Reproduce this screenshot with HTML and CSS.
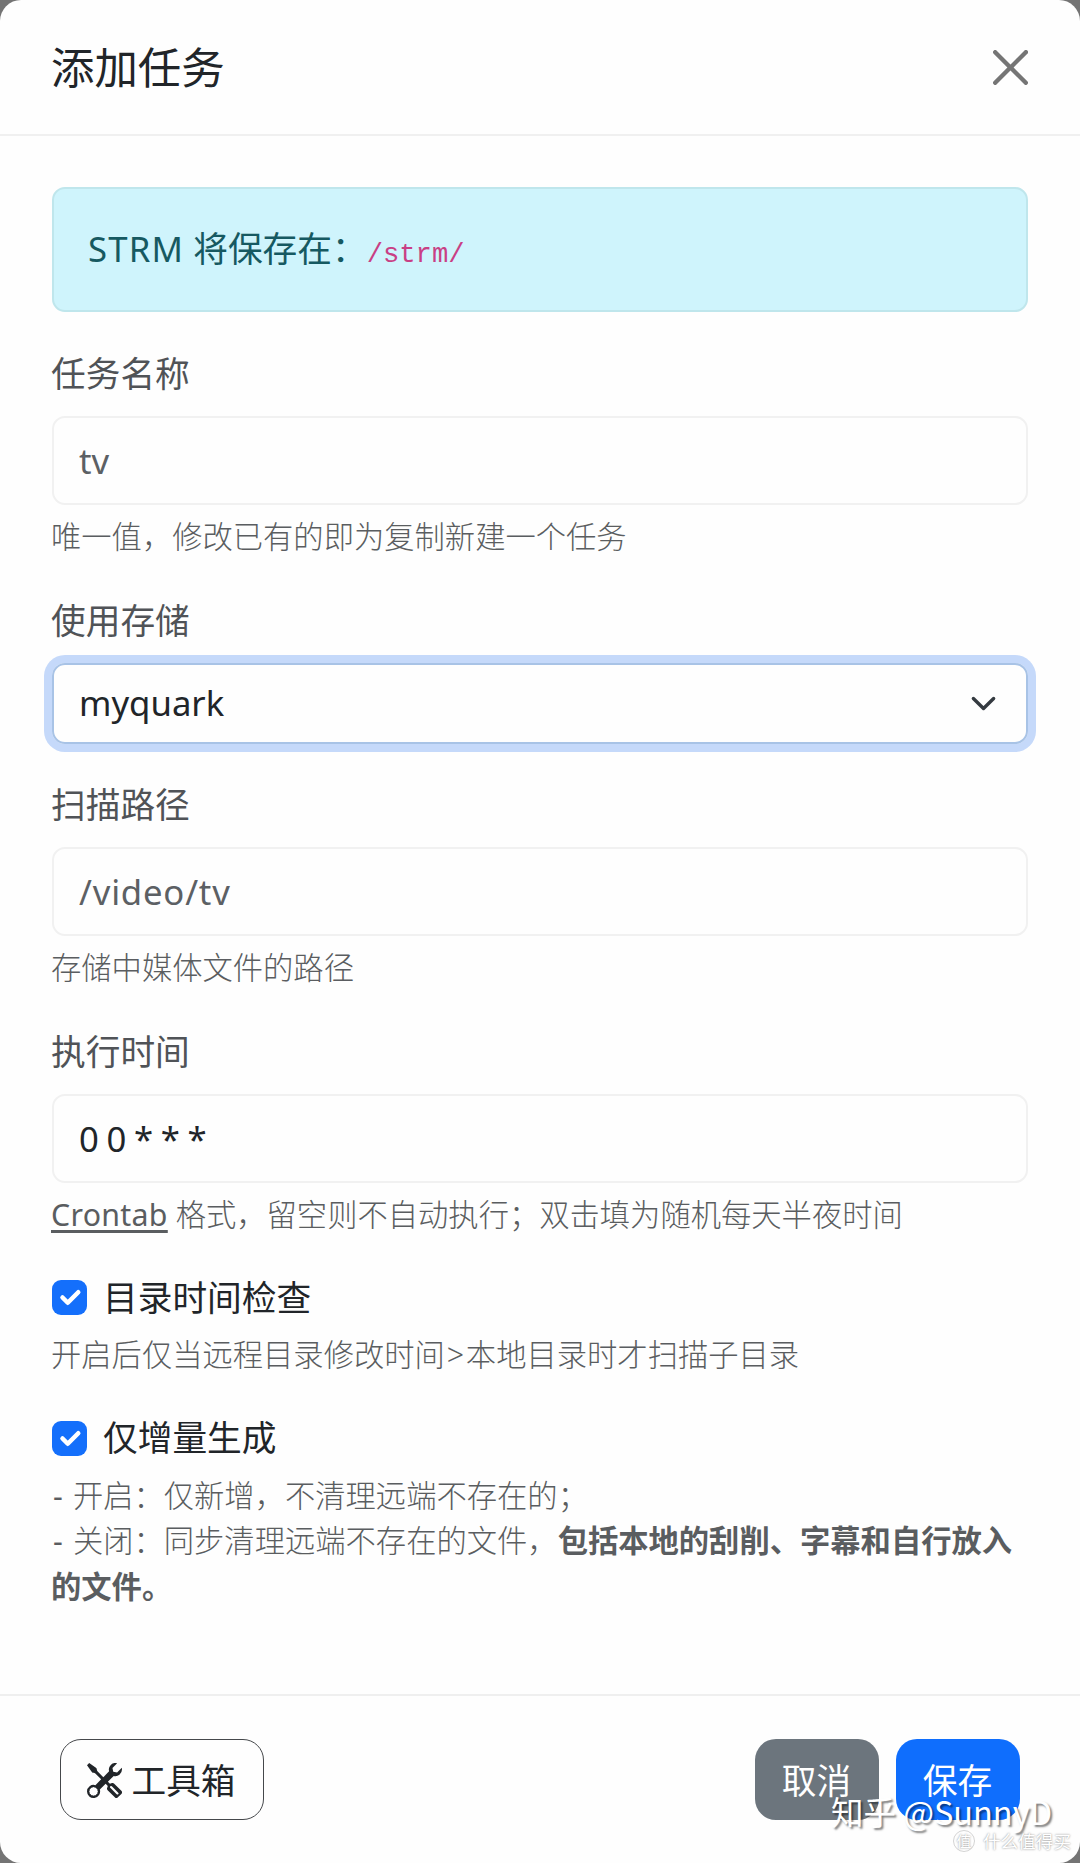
FILE: index.html
```
<!DOCTYPE html>
<html lang="zh-CN">
<head>
  <meta charset="UTF-8">
  <meta name="viewport" content="width=device-width, initial-scale=1.0">
  <title>添加任务</title>
  <link rel="stylesheet" href="styles.css">
</head>
<body>
  <div class="modal">
    <div class="modal-header">
      <h5 class="modal-title">添加任务</h5>
      <svg class="btn-close" viewBox="0 0 16 16"><path d="M.293.293a1 1 0 0 1 1.414 0L8 6.586 14.293.293a1 1 0 1 1 1.414 1.414L9.414 8l6.293 6.293a1 1 0 0 1-1.414 1.414L8 9.414l-6.293 6.293a1 1 0 0 1-1.414-1.414L6.586 8 .293 1.707a1 1 0 0 1 0-1.414z"/></svg>
    </div>

    <form class="modal-body">
      <div class="alert"><span class="alert-latin">STRM</span> 将保存在：<code>/strm/</code></div>

      <div class="field">
        <label class="form-label" for="name">任务名称</label>
        <input class="form-control" id="name" type="text" placeholder="tv">
        <div class="form-text">唯一值，修改已有的即为复制新建一个任务</div>
      </div>

      <div class="field">
        <label class="form-label">使用存储</label>
        <div class="form-select" tabindex="0">
          <span>myquark</span>
          <svg class="chevron" viewBox="0 0 16 16"><path d="m2 5 6 6 6-6"/></svg>
        </div>
      </div>

      <div class="field">
        <label class="form-label" for="path">扫描路径</label>
        <input class="form-control path-input" id="path" type="text" placeholder="/video/tv">
        <div class="form-text">存储中媒体文件的路径</div>
      </div>

      <div class="field">
        <label class="form-label" for="cron">执行时间</label>
        <input class="form-control cron-input" id="cron" type="text" value="0 0 * * *">
        <div class="form-text"><a class="cron-link">Crontab</a> 格式，留空则不自动执行；双击填为随机每天半夜时间</div>
      </div>

      <div class="field">
        <div class="form-check">
          <span class="check-box"><svg viewBox="0 0 20 20"><path d="m6 10 3 3 6-6"/></svg></span>
          <span>目录时间检查</span>
        </div>
        <div class="form-text">开启后仅当远程目录修改时间<span class="gt">&gt;</span>本地目录时才扫描子目录</div>
      </div>

      <div class="field">
        <div class="form-check">
          <span class="check-box"><svg viewBox="0 0 20 20"><path d="m6 10 3 3 6-6"/></svg></span>
          <span>仅增量生成</span>
        </div>
        <div class="form-text"><span class="dash">-</span> 开启：仅新增，不清理远端不存在的；<br><span class="dash">-</span> 关闭：同步清理远端不存在的文件，<strong>包括本地的刮削、字幕和自行放入的文件。</strong></div>
      </div>
    </form>

    <div class="modal-footer">
      <button class="btn btn-outline" type="button">
        <svg class="icon-tools" viewBox="0 0 16 16"><path d="M1 0 0 1l2.2 3.081a1 1 0 0 0 .815.419h.07a1 1 0 0 1 .708.293l2.675 2.675-2.617 2.654A3.003 3.003 0 0 0 0 13a3 3 0 1 0 5.878-.851l2.654-2.617.968.968-.305.914a1 1 0 0 0 .242 1.023l3.27 3.27a.997.997 0 0 0 1.414 0l1.586-1.586a.997.997 0 0 0 0-1.414l-3.27-3.27a1 1 0 0 0-1.023-.242L10.5 9.5l-.96-.96 2.68-2.643A3.005 3.005 0 0 0 16 3q0-.405-.102-.777l-2.14 2.141L12 4l-.364-1.757L13.777.102a3 3 0 0 0-3.675 3.68L7.462 6.46 4.793 3.793a1 1 0 0 1-.293-.707v-.071a1 1 0 0 0-.419-.814zm9.646 10.646a.5.5 0 0 1 .708 0l2.914 2.915a.5.5 0 0 1-.707.707l-2.915-2.914a.5.5 0 0 1 0-.708M3 11l.471.242.529.026.287.445.445.287.026.529L5 13l-.242.471-.026.529-.445.287-.287.445-.529.026L3 15l-.471-.242L2 14.732l-.287-.445L1.268 14l-.026-.529L1 13l.242-.471.026-.529.445-.287.287-.445.529-.026z"/></svg>
        工具箱
      </button>
      <div class="footer-actions">
        <button class="btn btn-secondary" type="button">取消</button>
        <button class="btn btn-primary" type="button">保存</button>
      </div>
    </div>
  </div>

  <div class="mark mark-zhihu">知乎 @SunnyD</div>
  <div class="mark mark-smzdm"><span class="mark-badge">值</span>什么值得买</div>
</body>
</html>
```
FILE: styles.css
```
* { box-sizing: border-box; }
html { font-size: 34.7px; }
body {
  margin: 0;
  height: 1863px;
  position: relative;
  overflow: hidden;
  background: #747474;
  color: #212529;
  font-family: "Noto Sans", "Noto Sans CJK SC", sans-serif;
  line-height: 52px;
}
.modal {
  display: flex;
  flex-direction: column;
  height: 1863px;
  background: #fefefe;
  border-radius: 21px;
}
.modal-header {
  display: flex;
  justify-content: space-between;
  align-items: center;
  height: 136px;
  padding: 1px 52px 0 51px;
  border-bottom: 2px solid #f0f0f0;
}
.modal-title { margin: 0; font-size: 43.4px; font-weight: 400; }
.btn-close { width: 35px; height: 35px; fill: #757575; }

.modal-body { flex: 1; padding: 51px 52px 0; }
.alert {
  height: 125px;
  padding: 34px 34px;
  margin-bottom: 35px;
  border: 2px solid #bfe6ec;
  border-radius: 13px;
  background: #cff4fc;
  color: #165961;
  white-space: nowrap;
}
.alert-latin { letter-spacing: 1.2px; }
.alert code {
  font-family: "Liberation Mono", monospace;
  font-size: 27.2px;
  color: #c93f85;
}
.field { margin-bottom: 34.7px; }
.form-label { display: block; height: 52px; margin: 0 0 17px -1px; padding-top: 1px; color: #505357; }
.form-control {
  display: block;
  width: 100%;
  height: 89px;
  padding: 0 25px;
  border: 2px solid #f1f1f1;
  border-radius: 13px;
  background: #fefefe;
  color: #212529;
  font: inherit;
  outline: none;
}
.form-control::placeholder { color: #5c6064; opacity: 1; }
.path-input { letter-spacing: .8px; }
.cron-input { word-spacing: -1.4px; }
.form-text {
  margin: 8.5px -1px 0;
  font-size: 30.3px;
  font-weight: 300;
  line-height: 45.5px;
  color: #5a5d60;
}
.form-text strong { font-weight: 700; }
.form-text .gt { display: inline-block; width: 21px; text-align: center; }
.form-text .dash { display: inline-block; width: 14px; text-align: center; font-weight: 400; }
.cron-link { font-weight: 400; letter-spacing: .3px; text-decoration: underline; text-underline-offset: 4px; }
.form-select {
  display: flex;
  justify-content: space-between;
  align-items: center;
  height: 81px;
  padding: 0 29px 0 25px;
  border: 2px solid #a8c3e6;
  border-radius: 13px;
  box-shadow: 0 0 0 8px #c5d9fa;
  outline: none;
}
.chevron { width: 27px; height: 27px; fill: none; stroke: #343a40; stroke-width: 2; stroke-linecap: round; stroke-linejoin: round; }

.form-check { display: flex; align-items: center; gap: 16px; height: 52px; }
.check-box { width: 35px; height: 35px; border-radius: 9px; background: #146ffb; }
.check-box svg { display: block; width: 35px; height: 35px; fill: none; stroke: #fff; stroke-width: 2.6; stroke-linecap: round; stroke-linejoin: round; }

.modal-footer {
  display: flex;
  justify-content: space-between;
  align-items: flex-start;
  height: 169px;
  padding: 43px 60px 0;
  border-top: 2px solid #efefef;
}
.footer-actions { display: flex; gap: 17px; }
.btn {
  display: flex;
  align-items: center;
  justify-content: center;
  width: 124px;
  height: 81px;
  padding: 2px 1px 0 0;
  border: none;
  border-radius: 21px;
  font: inherit;
  color: #fff;
}
.btn-outline { width: 204px; gap: 9px; border: 1.5px solid #45484b; background: #fefefe; color: #212529; }
.btn-secondary { background: #6c757d; }
.btn-primary { background: #0f6efd; }
.icon-tools { width: 35px; height: 35px; fill: #212529; }

/* watermarks over the footer */
.mark { position: absolute; display: flex; align-items: center; color: #fff; white-space: nowrap; }
.mark-zhihu {
  right: 28px;
  bottom: 26px;
  font-size: 32.5px;
  font-family: "Noto Sans CJK SC", sans-serif;
  text-shadow: 2px 2px 2px rgba(0, 0, 0, .5);
}
.mark-smzdm {
  right: 9px;
  bottom: 10px;
  gap: 8px;
  font-size: 17.6px;
  line-height: 24px;
  text-shadow: 0 0 2px rgba(0, 0, 0, .5);
}
.mark-badge {
  width: 22px;
  height: 22px;
  border: 1px solid #d4d4d4;
  border-radius: 50%;
  font-size: 15px;
  line-height: 20px;
  text-align: center;
}
```
